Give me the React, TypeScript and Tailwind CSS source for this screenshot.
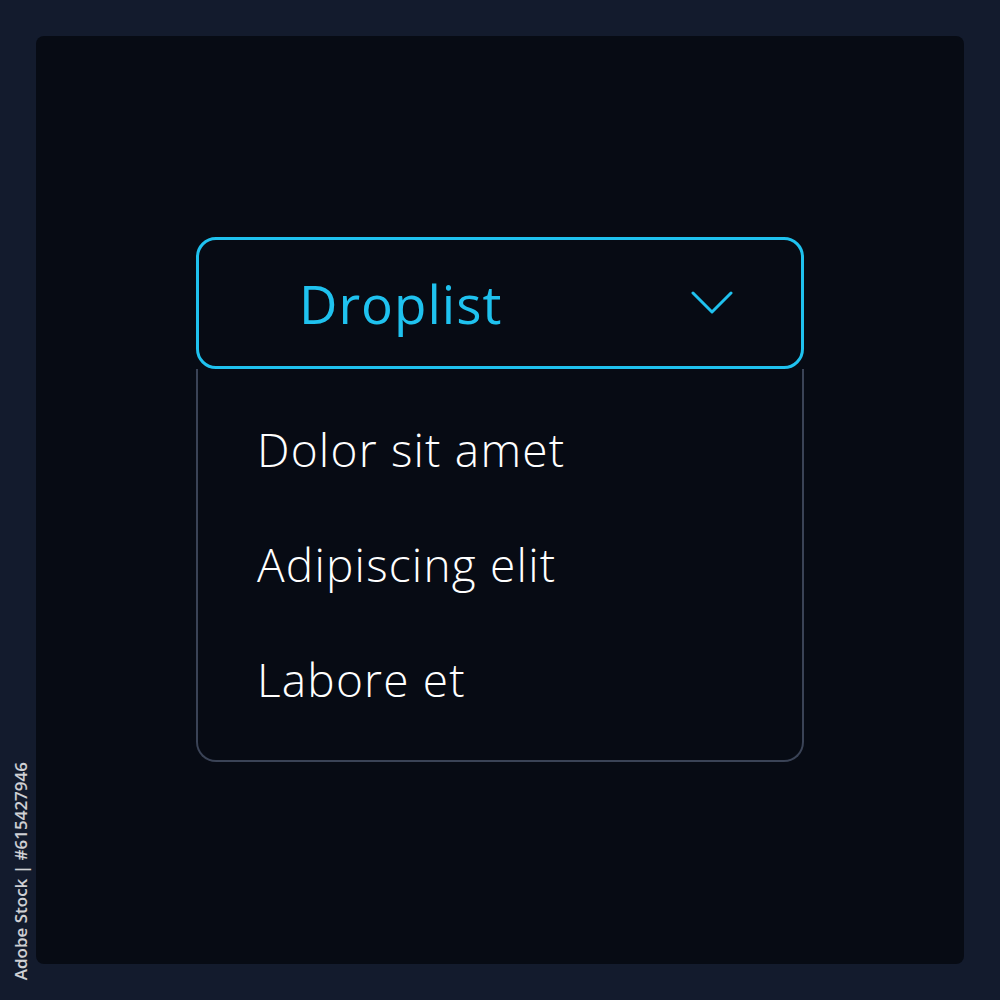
const items = ["Dolor sit amet", "Adipiscing elit", "Labore et"];

function Chevron() {
  return (
    <svg width="42" height="24" viewBox="0 0 42 24" fill="none">
      <path d="M2 2 L21 21 L40 2" stroke="#1fc2ef" strokeWidth="3" strokeLinecap="round" strokeLinejoin="round" />
    </svg>
  );
}

export default function App() {
  return (
    <div className="relative min-h-[1000px] w-[1000px] bg-[#131b2d] p-[36px] font-['Open_Sans',sans-serif]">
      <div className="h-[928px] rounded-[8px] bg-[#070b14] pl-[160px] pt-[201px]">
        <div className="w-[608px]">
          <div className="flex h-[132px] items-center justify-between rounded-[20px] border-[3px] border-[#1fc2ef] pl-[100px] pr-[68px]">
            <span className="text-[53px] font-medium leading-none tracking-[1px] text-[#1fc2ef]">Droplist</span>
            <Chevron />
          </div>
          <ul className="flex h-[393px] flex-col rounded-b-[20px] border-x-2 border-b-2 border-[#3a4356] pl-[59px] pt-[22px]">
            {items.map((item) => (
              <li key={item} className="flex h-[115px] items-center text-[46px] font-light leading-none tracking-[1.2px] text-white">
                {item}
              </li>
            ))}
          </ul>
        </div>
      </div>
      <div className="absolute left-[12px] top-[762px] rotate-180 whitespace-nowrap text-[17px] font-semibold leading-none text-white/80 [writing-mode:vertical-rl]">
        Adobe Stock | #615427946
      </div>
    </div>
  );
}
